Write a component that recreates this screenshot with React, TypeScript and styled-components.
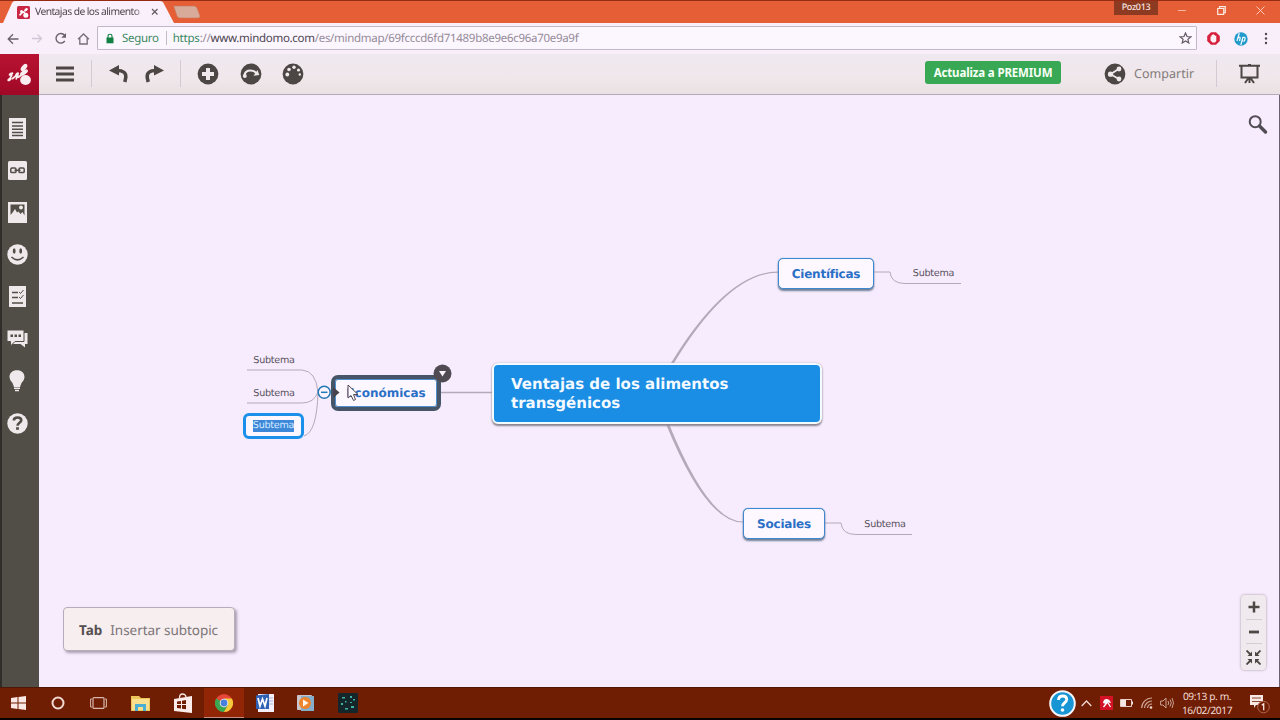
import React from "react";
import styled, { createGlobalStyle, css } from "styled-components";

const ui = `"Noto Sans", "Open Sans", sans-serif`;
const map = `"DejaVu Sans", sans-serif`;
const dark = "#4c4744";
const pale = "#efe9ec";
const line = "#b5a8b8";

const GlobalStyle = createGlobalStyle`
  * { box-sizing: border-box; }
  body { margin: 0; overflow: hidden; text-rendering: geometricPrecision; }
  svg { display: block; flex: none; }
`;

const Screen = styled.div`
  width: 1280px;
  height: 720px;
  display: flex;
  flex-direction: column;
  background: #f7ecfd;
  font-family: ${ui};
  overflow: hidden;
`;

const Text = styled.span<{ $size: number; $spacing?: number; $weight?: number; $color?: string }>`
  font-size: ${(p) => p.$size}px;
  letter-spacing: ${(p) => p.$spacing ?? 0}px;
  font-weight: ${(p) => p.$weight ?? "inherit"};
  color: ${(p) => p.$color ?? "inherit"};
  white-space: nowrap;
`;

const Slot = styled.div<{ $w: number; $active?: boolean }>`
  width: ${(p) => p.$w}px;
  height: 100%;
  flex: none;
  display: flex;
  align-items: center;
  justify-content: center;
  ${(p) => p.$active && css`background: #922506; border-bottom: 1px solid #c58f7e;`}
`;

const Spacer = styled.div`flex: 1;`;

/* Browser chrome */
const TitleBar = styled.header`
  height: 23px;
  flex: none;
  display: flex;
  background: #e55e36;
  border-top: 1px solid #942b12;
`;

const Tab = styled.div`
  position: relative;
  width: 174px;
  height: 22px;
  display: flex;
  align-items: center;
  padding-left: 17px;
  > * { position: relative; }
`;

const TabShape = styled.svg`
  && { position: absolute; left: 0; top: 0; }
`;

const TabTitle = styled.div`
  width: 112px;
  margin: -3px 0 0 5px;
  line-height: 18px;
  color: #4f474d;
  mask-image: linear-gradient(90deg, #000 88%, transparent);
`;

const TabClose = styled.div`margin-left: 4px;`;

const Profile = styled.div`
  width: 44px;
  height: 14px;
  background: #8c3a22;
  display: flex;
  justify-content: center;
  align-items: center;
  padding-bottom: 2px;
  line-height: 12px;
`;

const WindowButtons = styled.div`
  display: flex;
  height: 19px;
  width: 122px;
  padding-left: 4px;
`;

const AddressBar = styled.nav`
  height: 31px;
  flex: none;
  display: flex;
  align-items: center;
  background: #f8effb;
`;

const UrlBox = styled.div`
  width: 1100px;
  height: 24px;
  margin-top: -1px;
  display: flex;
  align-items: center;
  background: #fcf6ff;
  border: 1px solid #c3b8c6;
  border-radius: 1px;
  padding-left: 8px;
`;

const UrlDivider = styled.div`
  width: 1px;
  height: 14px;
  background: #c2bac4;
  margin: 0 6px 0 7px;
`;

/* Application */
const Toolbar = styled.div`
  height: 41px;
  flex: none;
  display: flex;
  align-items: center;
  background: linear-gradient(#f0e8f0, #efe7ea 60%, #e9e1e4);
  border-bottom: 1px solid #b6aab9;
  padding-bottom: 1px;
`;

const Brand = styled.div`
  width: 39px;
  height: 41px;
  margin-bottom: -2px;
  background: linear-gradient(#b81331, #9f0826);
  display: flex;
  align-items: center;
  justify-content: center;
`;

const Divider = styled.div<{ $gap?: number; $after?: number }>`
  width: 1px;
  height: 27px;
  background: #d3cad4;
  margin: 0 ${(p) => p.$after ?? 0}px 0 ${(p) => p.$gap ?? 0}px;
`;

const Premium = styled.button`
  width: 136px;
  height: 23px;
  margin: 0 36px 2px 0;
  border: 0;
  border-radius: 3px;
  padding: 0 0 1px;
  background: #39a854;
  font-family: ${ui};
  line-height: 20px;
`;

const Share = styled.div`
  display: flex;
  align-items: center;
  width: 110px;
  gap: 8px;
  padding-left: 7px;
  height: 30px;
`;

const Workspace = styled.div`
  height: 592px;
  flex: none;
  display: flex;
`;

const Sidebar = styled.aside`
  width: 39px;
  background: #504e47;
  border-left: 2px solid #2f2d29;
  padding: 12px 7px 0 0;
  display: flex;
  flex-direction: column;
`;

const Tool = styled.div`
  height: 42.2px;
  display: flex;
  align-items: center;
  justify-content: center;
`;

const Canvas = styled.main`
  position: relative;
  width: 1241px;
  background: #f7ecfd;
  border-right: 1px solid #685f70;
  font-family: ${map};
`;

const Connectors = styled.svg`
  position: absolute;
  left: 0;
  top: 0;
`;

const node = css<{ $x: number; $y: number; $w: number; $h: number }>`
  position: absolute;
  left: ${(p) => p.$x - 39}px;
  top: ${(p) => p.$y - 95}px;
  width: ${(p) => p.$w}px;
  height: ${(p) => p.$h}px;
`;

const RootTopic = styled.div`
  ${node}
  background: #1a8de4;
  border: 2px solid #f3fbff;
  border-radius: 6px;
  box-shadow: 0 2px 2px #8b8492, 0 0 2px #b4a9ba;
  padding: 10px 17px;
  color: #f4faff;
  font-weight: 700;
  font-size: 15px;
  line-height: 19px;
`;

const Topic = styled.div<{ $focused?: boolean }>`
  ${node}
  display: flex;
  align-items: center;
  justify-content: center;
  background: #fdf7ff;
  border-radius: 5px;
  border: 1.5px solid #3f87ce;
  box-shadow: 0 2px 2px #6d7f96, 0 0 1px #3f87ce;
  color: #2a70c6;
  font-weight: 700;
  font-size: 12px;
  ${(p) => p.$focused && css`
    border: 4px solid #465568;
    border-radius: 7px;
    box-shadow: inset 0 0 0 1px #4e8fd0;
  `}
`;

const Subtopic = styled.div<{ $selected?: boolean }>`
  ${node}
  display: flex;
  align-items: center;
  justify-content: center;
  font-size: 9.6px;
  letter-spacing: -0.25px;
  color: #57505b;
  ${(p) => p.$selected && css`
    border: 3px solid #1b90ea;
    border-radius: 6px;
    background: #fbf6ff;
    color: #d8ecff;
  `}
`;

const Highlight = styled.span`
  background: #3c87d8;
  line-height: 12px;
  height: 12px;
`;

const Overlay = styled.div`${node}`;

const Hint = styled.div`
  ${node}
  display: flex;
  align-items: center;
  gap: 8px;
  padding: 2px 0 0 15px;
  background: #f6eeef;
  border: 1px solid #b8abbb;
  border-radius: 4px;
  box-shadow: 2px 2px 3px #a99daf;
  font-family: ${ui};
`;

const ZoomPanel = styled.div`
  ${node}
  display: flex;
  flex-direction: column;
  align-items: center;
  background: #f0e9ed;
  border-radius: 4px;
  box-shadow: 0 0 2px 1px #cfc4d4;
`;

const ZoomButton = styled.div<{ $h: number }>`
  height: ${(p) => p.$h}px;
  width: 16px;
  display: flex;
  align-items: center;
  justify-content: center;
  & + & { border-top: 1px solid #d6ccd8; }
`;

/* Desktop */
const Taskbar = styled.footer`
  height: 33px;
  flex: none;
  display: flex;
  align-items: stretch;
  background: #701e03;
  border-top: 1px solid #4f1706;
  border-bottom: 2px solid #090201;
`;

const Clock = styled.div`
  width: 62px;
  display: flex;
  flex-direction: column;
  align-items: center;
  justify-content: center;
  color: #f0dcd7;
  line-height: 14.5px;
`;

type IconProps = { w: number; h: number; children: React.ReactNode };
const Icon = ({ w, h, children }: IconProps) => (
  <svg width={w} height={h} viewBox={`0 0 ${w} ${h}`} fill="none">{children}</svg>
);

const Badge = ({ children }: { children: React.ReactNode }) => (
  <Icon w={22} h={22}>
    <circle cx="11" cy="11" r="10.4" fill={dark} />
    {children}
  </Icon>
);

const BrandMark = () => (
  <svg width="26" height="26" viewBox="0 0 26 26" fill="#fbeef0">
    <ellipse cx="18.500" cy="18" rx="5.400" ry="5" />
    <ellipse cx="17" cy="5.500" rx="4.300" ry="2.300" transform="rotate(-50 17 5.500)" />
    <ellipse cx="17" cy="10.500" rx="4.500" ry="2.100" transform="rotate(-35 17 10.500)" />
    <ellipse cx="10" cy="12.500" rx="2.600" ry="1.500" transform="rotate(-50 10 12.500)" />
    <ellipse cx="4" cy="12" rx="2.600" ry="1.300" transform="rotate(-30 4 12)" />
    <ellipse cx="2.500" cy="17.500" rx="2.300" ry="1.300" transform="rotate(-30 2.500 17.500)" />
    <path d="m2.500 17.500 2.500-5M5 17l5-4M9 17.500l2-5M11 15.500l6-4.500" stroke="#fbeef0" strokeWidth="1.700" />
  </svg>
);

const BrowserChrome = () => (
  <>
    <TitleBar>
      <Tab>
        <TabShape width="206" height="22" viewBox="0 0 206 22">
          <path d="M3 22 12 2Q13 0 15 0H160Q163 0 164 3L174 22Z" fill="#f9f0fb" />
          <path d="M174 6Q173 5 175 5H194Q196 5 197 7L200 15Q200 17 198 17H180Q178 17 177 15Z" fill="#d7aa9a" stroke="#c37a60" strokeWidth=".6" />
        </TabShape>
        <Icon w={13} h={13}>
          <rect width="13" height="13" rx="1.500" fill="#c92743" />
          <g fill="#fff"><circle cx="8.800" cy="9.200" r="2.500" /><ellipse cx="9" cy="3.800" rx="2.200" ry="1.300" transform="rotate(-40 9 3.800)" /><circle cx="4.500" cy="5.500" r="1.500" /><path d="m2 8.500 4-3.500 1.500.5L9 8l-3-1-3 3z" /></g>
        </Icon>
        <TabTitle><Text $size={10.3} $spacing={-0.56}>Ventajas de los alimento</Text></TabTitle>
        <TabClose><Icon w={8} h={8}><path d="m1 1 5.500 5.500m0-5.500L1 6.500" stroke="#655b60" strokeWidth="1.200" /></Icon></TabClose>
      </Tab>
      <Spacer />
      <Profile><Text $size={9} $spacing={-0.35} $weight={500} $color="#f9e8e3">Poz013</Text></Profile>
      <WindowButtons>
        <Slot $w={40}><Icon w={9} h={9}><path d="M0 4.500h8" stroke="#f7b9a4" /></Icon></Slot>
        <Slot $w={39}><Icon w={9} h={9}><path d="M2.500 2V.7h5.800v6H7M.7 2.500h6v5.800h-6z" stroke="#fde9e2" strokeWidth="1.200" /></Icon></Slot>
        <Slot $w={39}><Icon w={9} h={9}><path d="m.5.5 8 8m0-8-8 8" stroke="#fbcbbb" /></Icon></Slot>
      </WindowButtons>
    </TitleBar>
    <AddressBar>
      <Slot $w={26}><Icon w={12} h={12}><path d="M11.500 6H1.200M6 1.200 1.200 6 6 10.800" stroke="#6a616b" strokeWidth="1.300" /></Icon></Slot>
      <Slot $w={22}><Icon w={11} h={11}><path d="M0 5.500h9.500M5.500 1.500l4 4-4 4" stroke="#d2c8d5" strokeWidth="1.300" /></Icon></Slot>
      <Slot $w={24}><Icon w={13} h={13}><path d="M10.800 9A4.800 4.800 0 1 1 10.500 3.200" stroke="#6a616b" strokeWidth="1.400" /><path d="M12 1v4.800H7.300z" fill="#6a616b" /></Icon></Slot>
      <Slot $w={23}><Icon w={13} h={12}><path d="M1 6.200 6.500 1 12 6.200M2.800 5v6h7.400V5" stroke="#766d77" strokeWidth="1.300" /></Icon></Slot>
      <Spacer />
      <UrlBox>
        <Icon w={8} h={11}><rect x=".5" y="4.500" width="7" height="5.800" fill="#128242" /><path d="M2 5V3.200Q2 1.300 4 1.300T6 3.200V5" stroke="#128242" strokeWidth="1.100" /></Icon>
        <Slot $w={8} />
        <Text $size={11.5} $spacing={-0.3} $color="#3b8a60">Seguro</Text>
        <UrlDivider />
        <Text $size={11.5} $spacing={-0.29} $color="#958c98">
          <Text $size={11.5} $spacing={-0.2} $color="#3b8a60">https</Text>://<Text $size={11.5} $spacing={-0.29} $color="#4d4550">www.mindomo.com</Text>/es/mindmap/69fcccd6fd71489b8e9e6c96a70e9a9f
        </Text>
        <Spacer />
        <Slot $w={22}><Icon w={13} h={12}><path d="m6.500 1 1.500 3.500 3.900.3-3 2.500.9 3.700-3.300-2-3.300 2 .9-3.700-3-2.500L5 4.500z" stroke="#655b67" strokeWidth="1.200" /></Icon></Slot>
      </UrlBox>
      <Slot $w={32}><Icon w={13} h={13}><path d="M4 .2h5L12.800 4v5L9 12.800H4L.2 9V4z" fill="#d6203c" /><path d="M3.500 4.500h1V3h1v-.8h1.300V3H8v.8h1.300V9L8 10.600H5.500L3.500 8.500z" fill="#fbf0f5" /></Icon></Slot>
      <Slot $w={23}><Icon w={14} h={14}><circle cx="7" cy="7" r="6.700" fill="#229acb" /><path d="M5.300 1 3 9M4.200 6q2-2 2 0L5.500 9M9 5 6.800 13M8.900 5.300h1.300q1.200 0 .8 1.500L10.500 9H8" stroke="#eefaff" strokeWidth="1.200" /></Icon></Slot>
      <Slot $w={28}><Icon w={4} h={13}><g fill="#51464f"><circle cx="2" cy="2" r="1.200" /><circle cx="2" cy="6.500" r="1.200" /><circle cx="2" cy="11" r="1.200" /></g></Icon></Slot>
    </AddressBar>
  </>
);

const AppToolbar = () => (
  <Toolbar>
    <Brand><BrandMark /></Brand>
    <Slot $w={52}><Icon w={18} h={16}><path d="M0 2h18M0 8h18M0 14h18" stroke={dark} strokeWidth="3" /></Icon></Slot>
    <Divider $after={9} />
    <Slot $w={35}><Icon w={19} h={18}><path d="M0 5.500 10 0v10.500z" fill={dark} /><path d="M8 5.500Q17.500 5.500 16.800 12.500L15.800 17" stroke={dark} strokeWidth="3.500" /></Icon></Slot>
    <Slot $w={36}><Icon w={19} h={18}><path d="M19 5.500 9 0v10.500z" fill={dark} /><path d="M11 5.500Q1.500 5.500 2.200 12.500L3.200 17" stroke={dark} strokeWidth="3.500" /></Icon></Slot>
    <Divider $gap={8} $after={6} />
    <Slot $w={42}><Badge><path d="M11 5v12M5 11h12" stroke={pale} strokeWidth="4" /></Badge></Slot>
    <Slot $w={43}><Badge><path d="M4.500 12.500Q5 7.500 10.500 7.500 15 7.500 17 11.500" stroke={pale} strokeWidth="2.200" /><circle cx="4.800" cy="13" r="2" fill={pale} /><path d="m13.500 12.800 5.800-.8-1.800-5z" fill={pale} /></Badge></Slot>
    <Slot $w={41}><Badge><g fill={pale}><circle cx="5.300" cy="11.500" r="1.900" /><circle cx="7" cy="6.500" r="1.800" /><circle cx="12" cy="4.300" r="1.700" /><circle cx="16.500" cy="7" r="1.600" /><circle cx="17.800" cy="11.500" r="1.200" /></g></Badge></Slot>
    <Spacer />
    <Premium><Text $size={11.5} $spacing={-0.15} $weight={700} $color="#f7fff7">Actualiza a PREMIUM</Text></Premium>
    <Share>
      <Badge><path d="m15 5.800-8.500 5.400L15 16" stroke={pale} strokeWidth="1.800" /><g fill={pale}><circle cx="15" cy="6" r="2.400" /><circle cx="6.500" cy="11.200" r="2.600" /><circle cx="15" cy="16" r="2.400" /></g></Badge>
      <Text $size={12.5} $spacing={0.02} $color="#817a7a">Compartir</Text>
    </Share>
    <Divider $gap={9} $after={2} />
    <Slot $w={61}><Icon w={21} h={20}><path d="M0 1.800h21M2.500 2v11.500h16V2M10.500 13v6M9.500 14 6 19M11.500 14l3.500 5" stroke={dark} strokeWidth="2" /><path d="M9 0h3v2H9z" fill={dark} /></Icon></Slot>
  </Toolbar>
);

const SideTools = () => (
  <Sidebar>
    <Tool><Icon w={17} h={21}><path d="M0 0h17v21H0z" fill={pale} /><path d="M3 4.500h11M3 8h11M3 11.200h11M3 14.500h11M3 17.500h11" stroke="#504e47" strokeWidth="1.400" /></Icon></Tool>
    <Tool><Icon w={19} h={19}><rect width="19" height="19" rx="1.500" fill={pale} /><rect x="2.800" y="7" width="5.200" height="4.600" rx="1.200" stroke="#504e47" strokeWidth="1.500" /><rect x="11" y="7" width="5.200" height="4.600" rx="1.200" stroke="#504e47" strokeWidth="1.500" /><path d="M6.500 9.300h6" stroke="#504e47" strokeWidth="1.500" /></Icon></Tool>
    <Tool><Icon w={19} h={21}><path d="M0 0h19v21H0z" fill={pale} /><path d="M2.500 2.500h14v11l-2-3.500-2 2-2-2.500-1.500 1L7 7l-2 3-2.500 3z" fill="#504e47" /><circle cx="13" cy="5.500" r="2" fill={pale} /></Icon></Tool>
    <Tool><Icon w={21} h={21}><circle cx="10.500" cy="10.500" r="10.200" fill={pale} /><ellipse cx="7.200" cy="7" rx="1.400" ry="2.700" fill="#504e47" /><ellipse cx="13.700" cy="7" rx="1.400" ry="2.700" fill="#504e47" /><path d="M4.500 13q6 5.800 12 0" stroke="#504e47" strokeWidth="1.500" /></Icon></Tool>
    <Tool><Icon w={17} h={21}><path d="M0 0h17v21H0z" fill={pale} /><path d="M3 6.500h6M3 11.500h6M3 17h11" stroke="#504e47" strokeWidth="1.600" /><path d="m10 6 1.500 1.500 3-3.500M10 11l1.500 1.500 3-3.500" stroke="#504e47" /></Icon></Tool>
    <Tool><Icon w={21} h={18}><path d="M6 3h14.500v11H18v3.500L13.500 14H6z" fill={pale} /><path d="M0 0h17v11.500H8L3.500 16v-4.500H0z" fill={pale} stroke="#504e47" strokeWidth="1" /><path d="M3.500 4.500h2.500v2.500H3.500zM7.500 4.500H10v2.500H7.500zM11.500 4.500H14v2.500h-2.500z" fill="#504e47" /></Icon></Tool>
    <Tool><Icon w={16} h={22}><path d="M3.500 13Q.5 10 .5 7.200C.5 3 3.500.3 8 .3s7.500 2.700 7.500 6.900q0 2.800-3 5.800L11 17H5z" fill={pale} /><path d="M5 18.300h6M6 20.500h4" stroke={pale} strokeWidth="1.500" /></Icon></Tool>
    <Tool><Icon w={21} h={21}><circle cx="10.500" cy="10.500" r="10.200" fill={pale} /><path d="M6.800 7.500q.2-3 3.800-3t3.700 2.800c0 2.500-3.800 2.500-3.800 5.500" stroke="#504e47" strokeWidth="2.600" /><path d="M9.100 14.200h2.800v2.600H9.100z" fill="#504e47" /></Icon></Tool>
  </Sidebar>
);

const MindMap = () => (
  <Canvas>
    <Connectors width="1240" height="592" viewBox="39 95 1240 592" fill="none">
      <path d="M671 363Q727 271.500 778 271.500V272.800Q729 272.500 674 363Z" fill={line} />
      <path d="M666 424Q706 522.600 743 522.600V521.500Q709 522 669 424Z" fill={line} />
      <g stroke={line}>
        <path d="M441 392.500H493" strokeWidth="1.500" />
        <path d="M874 272H890Q891 283.500 905 283.500H961" />
        <path d="M825 523H841Q842 534.500 856 534.500H912" />
        <path d="M247 370H302Q316 371 318 392Q314 403 302 403H247" />
        <path d="M318 392Q317 432 304 436" />
      </g>
    </Connectors>
    <RootTopic $x={492} $y={363} $w={330} $h={61}>Ventajas de los alimentos<br />transgénicos</RootTopic>
    <Topic $x={778} $y={258} $w={96} $h={31}><Text $size={12} $spacing={-0.25}>Científicas</Text></Topic>
    <Topic $x={743} $y={508} $w={82} $h={31}><Text $size={12} $spacing={-0.2}>Sociales</Text></Topic>
    <Topic $focused $x={331} $y={375} $w={110} $h={36}><Text $size={12}>Económicas</Text></Topic>
    <Subtopic $x={905} $y={264} $w={57} $h={18}>Subtema</Subtopic>
    <Subtopic $x={856} $y={515} $w={58} $h={18}>Subtema</Subtopic>
    <Subtopic $x={245} $y={351} $w={58} $h={18}>Subtema</Subtopic>
    <Subtopic $x={245} $y={384} $w={58} $h={18}>Subtema</Subtopic>
    <Subtopic $selected $x={243} $y={413} $w={61} $h={26}><Highlight>Subtema</Highlight></Subtopic>
    <Overlay $x={317} $y={385} $w={23} $h={15}>
      <Icon w={23} h={15}><circle cx="7.200" cy="7.300" r="6" fill="#faf4ff" stroke="#2378b7" strokeWidth="1.500" /><path d="M4 7.300h6.500" stroke="#2378b7" strokeWidth="1.500" /><path d="m16 2 6.500 5.500L16 13z" fill="#46434c" /></Icon>
    </Overlay>
    <Overlay $x={433} $y={364} $w={19} $h={19}>
      <Icon w={19} h={19}><circle cx="9.500" cy="9.500" r="9" fill="#504b52" /><path d="M6 7h7l-3.500 5.500z" fill="#faf2fc" /></Icon>
    </Overlay>
    <Overlay $x={347} $y={384} $w={13} $h={18}>
      <Icon w={13} h={18}><path d="M1 1v13l3-2.500 2.500 5 2-1-2-5H11z" fill="#fdf9ff" stroke="#504953" strokeWidth="1" /></Icon>
    </Overlay>
    <Overlay $x={1248} $y={115} $w={20} $h={20}>
      <Icon w={20} h={20}><circle cx="7.200" cy="6.700" r="5.500" stroke="#514b54" strokeWidth="2" /><path d="m11.500 11 6 6" stroke="#514b54" strokeWidth="3.500" strokeLinecap="round" /></Icon>
    </Overlay>
    <Hint $x={63} $y={607} $w={172} $h={44}>
      <Text $size={13.5} $weight={700} $color="#55504f">Tab</Text>
      <Text $size={13.5} $spacing={-0.05} $color="#7c7578">Insertar subtopic</Text>
    </Hint>
    <ZoomPanel $x={1241} $y={595} $w={25} $h={75}>
      <ZoomButton $h={24}><Icon w={12} h={12}><path d="M6 .5v11M.5 6h11" stroke={dark} strokeWidth="2.500" /></Icon></ZoomButton>
      <ZoomButton $h={24}><Icon w={10} h={4}><path d="M0 2h10" stroke={dark} strokeWidth="2.800" /></Icon></ZoomButton>
      <ZoomButton $h={27}><Icon w={15} h={15}><path d="m.5.5 4.500 4.500M14.500.5 10 5M.5 14.500 5 10M14.500 14.500 10 10" stroke={dark} strokeWidth="1.800" /><path d="M6 1.500V6H1.500zM9 1.500V6h4.500zM6 13.500V9H1.500zM9 13.500V9h4.500z" fill={dark} /></Icon></ZoomButton>
    </ZoomPanel>
  </Canvas>
);

const DesktopBar = () => (
  <Taskbar>
    <Slot $w={36}><Icon w={15} h={14}><path d="m0 2 6.500-1v5.500H0zM7.500.9 15 0v6.500H7.500zM0 7.500h6.500V13L0 12zM7.500 7.500H15V14l-7.500-1z" fill="#fae8e4" /></Icon></Slot>
    <Slot $w={43}><Icon w={14} h={14}><circle cx="7" cy="7" r="5.500" stroke="#f2dad3" strokeWidth="2" /></Icon></Slot>
    <Slot $w={39}><Icon w={17} h={12}><rect x="3" y=".6" width="11" height="10.800" rx="1" stroke="#d8b8ad" strokeWidth="1.200" /><path d="M2 2H.6v8H2M15 2h1.400v8H15" stroke="#d8b8ad" /></Icon></Slot>
    <Slot $w={44}><Icon w={19} h={16}><path d="M0 1h8l2 2h9v13H0z" fill="#edc65b" /><path d="M1 4h17v11H1z" fill="#f9df8e" /><path d="M4 16V9h11v7h-3v-4H7v4z" fill="#4baed3" /></Icon></Slot>
    <Slot $w={42}><Icon w={18} h={20}><path d="M5.500 5Q5.500 1 8.500 1T12 4" stroke="#f7e4e1" strokeWidth="1.300" /><path d="m0 6 18-3v17L0 18z" fill="#fbedeb" /><path d="m3 8.500 4-.6V11H3zM8 7.700l4-.6V11H8zM3 12h4v3.600l-4-.5zM8 12h4v4.300l-4-.6z" fill="#701e03" /></Icon></Slot>
    <Slot $w={40} $active><Icon w={18} h={18}><circle cx="9" cy="9" r="9" fill="#e7463b" /><path d="M1.200 4.500A9 9 0 0 0 9 18l4-7z" fill="#39a750" /><path d="M9 18A9 9 0 0 0 16.800 4.500H9l4 6.500z" fill="#f4ca38" /><circle cx="9" cy="9" r="4.300" fill="#f6eff0" /><circle cx="9" cy="9" r="3.400" fill="#4780dc" /></Icon></Slot>
    <Slot $w={41}><Icon w={18} h={18}><path d="M2 0h16v18H2z" fill="#f4eff8" /><path d="M13 4h4M13 7h4M13 10h4" stroke="#a7b7dc" /><path d="M0 1.500 13 0v15L0 15z" fill="#2f62b5" /><path d="m2 4 2 8 2.500-7L9 12l2-8" stroke="#fff" strokeWidth="1.700" /></Icon></Slot>
    <Slot $w={41}><Icon w={17} h={16}><rect x="0" y="0" width="15" height="15" rx="1" fill="#c9c5cb" /><path d="M4 1h13v15H4z" fill="#85aecb" /><circle cx="8" cy="8" r="6" fill="#ef842e" /><path d="M6 4.500v7L11.500 8z" fill="#fff7ef" /></Icon></Slot>
    <Slot $w={44}><Icon w={20} h={20}><rect width="20" height="20" rx="1" fill="#15262a" /><g fill="#3fb3a8"><path d="M4 4h3v1.500H4zM12 3h2v2h-2zM15 6h2v1.500h-2zM3 10h2v2H3zM7 8h1.500v1.500H7zM7 15h3v1.500H7zM13 13h3v2h-3zM12 9h2v1h-2z" /></g></Icon></Slot>
    <Spacer />
    <Slot $w={28}><Icon w={27} h={27}><circle cx="13.500" cy="13.500" r="12.300" fill="#1795d5" stroke="#f7f5fa" strokeWidth="2" /><path d="M9.500 10q.2-4 4.200-4t4 3.500c0 3-4.200 3.300-4.200 6.800" stroke="#fff" strokeWidth="2.800" /><circle cx="13.500" cy="20" r="1.800" fill="#fff" /></Icon></Slot>
    <Slot $w={20}><Icon w={11} h={7}><path d="m.7 6 4.800-5 4.800 5" stroke="#efd8d1" strokeWidth="1.300" /></Icon></Slot>
    <Slot $w={20}><Icon w={13} h={14}><path d="M0 0h13v14H0z" fill="#d31225" /><path d="M3 7Q3.500 3 6.500 3t4.500 4L8 6.500 6 8z" fill="#fff" /><path d="m7.500 6-4 5M8 7l2.500 4" stroke="#fff" strokeWidth="1.300" /></Icon></Slot>
    <Slot $w={21}><Icon w={13} h={8}><path d="M.5.500h11v7H.5z" stroke="#e8d0c9" /><path d="M1 1h5v6H1zM12 2.500h1v3h-1z" fill="#f5e8e5" /></Icon></Slot>
    <Slot $w={20}><Icon w={12} h={12}><path d="M.7 11A10 10 0 0 1 11 1M3.500 11A7.500 7.500 0 0 1 11 4M6.500 11A4.500 4.500 0 0 1 11 7" stroke="#cda79b" strokeWidth="1.200" /><circle cx="10" cy="10.500" r="1.300" fill="#ecd6d0" /></Icon></Slot>
    <Slot $w={19}><Icon w={14} h={12}><path d="M.6 4H3l3-3v10L3 8H.6z" stroke="#c9a296" /><path d="M8 4q1.500 2 0 4M10 2.500q2.500 3.500 0 7M12 1q3 5 0 10" stroke="#c9a296" /></Icon></Slot>
    <Clock>
      <Text $size={10.2} $spacing={-0.4}>09:13 p. m.</Text>
      <Text $size={10.2} $spacing={-0.4}>16/02/2017</Text>
    </Clock>
    <Slot $w={42}><Icon w={21} h={21}><path d="M1 2h13v10H7l-2 3v-3H1z" fill="#f8e9e5" /><path d="M3 5h9M3 8.500h9" stroke="#8b4631" /><circle cx="14.500" cy="14" r="5.800" fill="#701e03" stroke="#b46852" /><path d="m12.700 12.200 2-1.500v6.500" stroke="#f6e5e0" strokeWidth="1.300" /></Icon></Slot>
  </Taskbar>
);

export default function App() {
  return (
    <Screen>
      <GlobalStyle />
      <BrowserChrome />
      <AppToolbar />
      <Workspace>
        <SideTools />
        <MindMap />
      </Workspace>
      <DesktopBar />
    </Screen>
  );
}
